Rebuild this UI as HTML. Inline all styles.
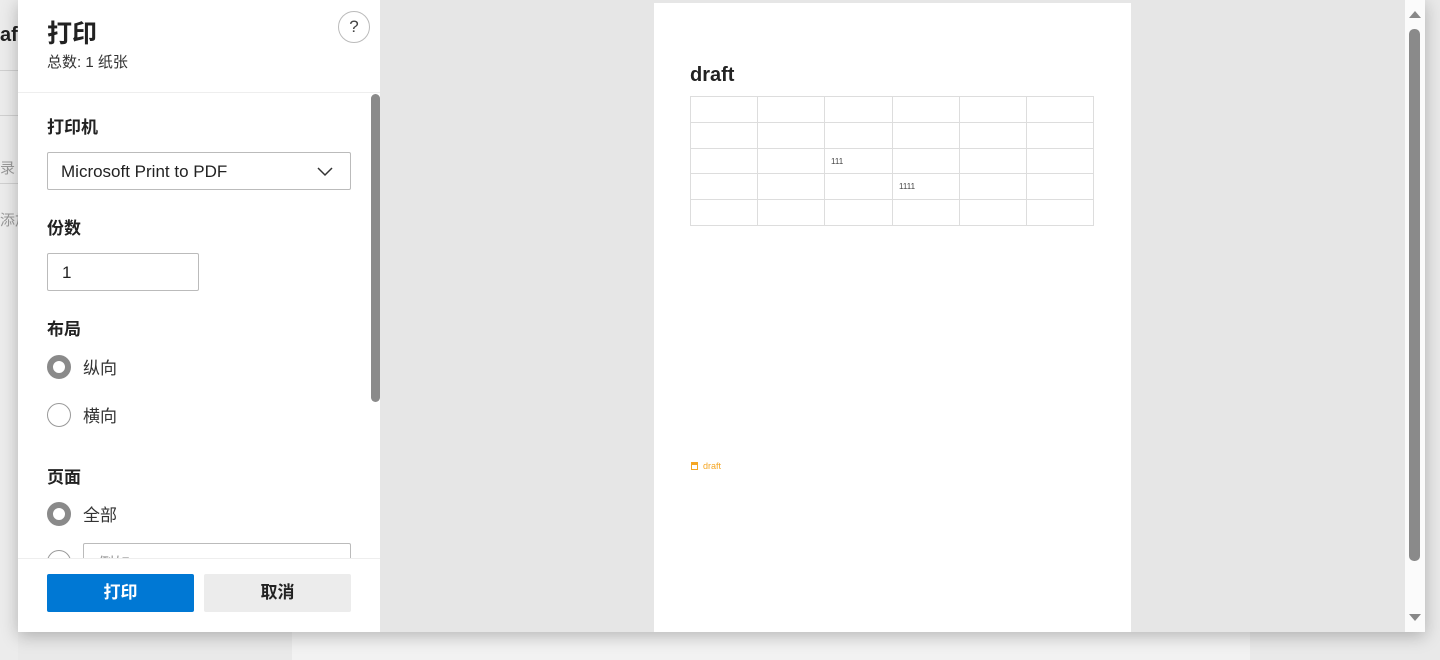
<!DOCTYPE html>
<html><head><meta charset="utf-8"><style>
*{box-sizing:border-box;margin:0;padding:0}
body{width:1440px;height:660px;overflow:hidden;background:#e9e9e9;font-family:"Liberation Sans","Noto Sans CJK SC",sans-serif;position:relative;color:#222}
.abs{position:absolute}
.dlg{left:18px;top:0;width:1407px;height:632px;background:#e6e6e6;box-shadow:0 4px 16px rgba(0,0,0,.25)}
.left{left:0;top:0;width:362px;height:632px;background:#fff;overflow:hidden}
.lbl{font-size:17px;font-weight:bold;color:#222;left:29px}
.radio{width:24px;height:24px;border-radius:50%;left:29px}
.on{border:6px solid #8a8a8a}
.off{border:1px solid #999}
.rt{left:65px;font-size:17px;color:#333}
</style></head><body>
<div class="abs" style="left:0;top:0;width:18px;height:660px;background:#ececec"></div>
<div class="abs" style="left:0;top:24px;font-size:20px;font-weight:bold;color:#222">af</div>
<div class="abs" style="left:0;top:70px;width:18px;height:1px;background:#d0d0d0"></div>
<div class="abs" style="left:0;top:115px;width:18px;height:1px;background:#d0d0d0"></div>
<div class="abs" style="left:0;top:157px;font-size:15px;color:#999">录</div>
<div class="abs" style="left:0;top:183px;width:18px;height:1px;background:#d0d0d0"></div>
<div class="abs" style="left:0;top:209px;font-size:15px;color:#999">添加</div>
<div class="abs" style="left:292px;top:632px;width:958px;height:28px;background:#f2f2f2"></div>
<div class="abs dlg">
 <div class="abs left">
  <div class="abs" style="left:29px;top:14px;font-size:25px;font-weight:bold">打印</div>
  <div class="abs" style="left:29px;top:51px;font-size:15px;color:#333">总数: 1 纸张</div>
  <div class="abs" style="left:320px;top:11px;width:32px;height:32px;border:1px solid #bbb;border-radius:50%;text-align:center;line-height:30px;font-size:17px;color:#444">?</div>
  <div class="abs" style="left:0;top:92px;width:362px;height:1px;background:#eee"></div>
  <div class="abs lbl" style="top:113px">打印机</div>
  <div class="abs" style="left:29px;top:152px;width:304px;height:38px;border:1px solid #bbb;border-radius:2px;font-size:17px;padding:9px 13px;color:#222">Microsoft Print to PDF
   <svg class="abs" style="right:17px;top:14px" width="16" height="10" viewBox="0 0 16 10"><path d="M1 1l7 7 7-7" fill="none" stroke="#333" stroke-width="1.5"/></svg></div>
  <div class="abs lbl" style="top:214px">份数</div>
  <div class="abs" style="left:29px;top:253px;width:152px;height:38px;border:1px solid #bbb;border-radius:2px;font-size:17px;padding:9px 14px">1</div>
  <div class="abs lbl" style="top:315px">布局</div>
  <div class="abs radio on" style="top:355px"></div><div class="abs rt" style="top:354px">纵向</div>
  <div class="abs radio off" style="top:403px"></div><div class="abs rt" style="top:402px">横向</div>
  <div class="abs lbl" style="top:463px">页面</div>
  <div class="abs radio on" style="top:502px"></div><div class="abs rt" style="top:501px">全部</div>
  <div class="abs radio off" style="top:550px"></div>
  <div class="abs" style="left:65px;top:543px;width:268px;height:30px;border:1px solid #bbb;border-radius:2px;font-size:16px;color:#999;padding:6px 14px">例如1-5，8，11-13</div>
  <div class="abs" style="left:0;top:558px;width:362px;height:74px;background:#fff;border-top:1px solid #eee"></div>
  <div class="abs" style="left:353px;top:94px;width:9px;height:308px;background:#8a8a8a;border-radius:5px"></div>
  <div class="abs" style="left:29px;top:574px;width:147px;height:38px;background:#0078d4;border-radius:2px;color:#fff;font-weight:bold;font-size:17px;text-align:center;line-height:38px">打印</div>
  <div class="abs" style="left:186px;top:574px;width:147px;height:38px;background:#ececec;border-radius:2px;color:#222;font-weight:bold;font-size:17px;text-align:center;line-height:38px">取消</div>
 </div>
 <div class="abs" style="left:636px;top:3px;width:477px;height:629px;background:#fff">
  <div class="abs" style="left:36px;top:61px;font-size:20px;font-weight:bold;color:#222">draft</div>
  <table class="abs" style="left:36px;top:93px;border-collapse:collapse;font-size:8px;color:#444">
   <tr><td style="width:67px;height:26px;border:1px solid #ddd"></td><td style="width:67px;border:1px solid #ddd"></td><td style="width:68px;border:1px solid #ddd"></td><td style="width:67px;border:1px solid #ddd"></td><td style="width:67px;border:1px solid #ddd"></td><td style="width:67px;border:1px solid #ddd"></td></tr>
   <tr><td style="height:26px;border:1px solid #ddd"></td><td style="border:1px solid #ddd"></td><td style="border:1px solid #ddd"></td><td style="border:1px solid #ddd"></td><td style="border:1px solid #ddd"></td><td style="border:1px solid #ddd"></td></tr>
   <tr><td style="height:25px;border:1px solid #ddd"></td><td style="border:1px solid #ddd"></td><td style="border:1px solid #ddd;padding-left:6px">111</td><td style="border:1px solid #ddd"></td><td style="border:1px solid #ddd"></td><td style="border:1px solid #ddd"></td></tr>
   <tr><td style="height:26px;border:1px solid #ddd"></td><td style="border:1px solid #ddd"></td><td style="border:1px solid #ddd"></td><td style="border:1px solid #ddd;padding-left:6px">1111</td><td style="border:1px solid #ddd"></td><td style="border:1px solid #ddd"></td></tr>
   <tr><td style="height:26px;border:1px solid #ddd"></td><td style="border:1px solid #ddd"></td><td style="border:1px solid #ddd"></td><td style="border:1px solid #ddd"></td><td style="border:1px solid #ddd"></td><td style="border:1px solid #ddd"></td></tr>
  </table>
  <div class="abs" style="left:37px;top:459px;width:7px;height:8px;border:1px solid #f5a623;border-top-width:3px"></div>
  <div class="abs" style="left:49px;top:458px;font-size:9px;color:#f5a623">draft</div>
 </div>
 <div class="abs" style="left:1387px;top:0;width:20px;height:632px;background:#fbfbfb">
  <svg class="abs" style="left:4px;top:10px" width="12" height="8"><path d="M0 8L6 1 12 8z" fill="#888"/></svg>
  <div class="abs" style="left:4px;top:29px;width:11px;height:532px;background:#8a8a8a;border-radius:5px"></div>
  <svg class="abs" style="left:4px;top:614px" width="12" height="8"><path d="M0 0L6 7 12 0z" fill="#888"/></svg>
 </div>
</div>
</body></html>
